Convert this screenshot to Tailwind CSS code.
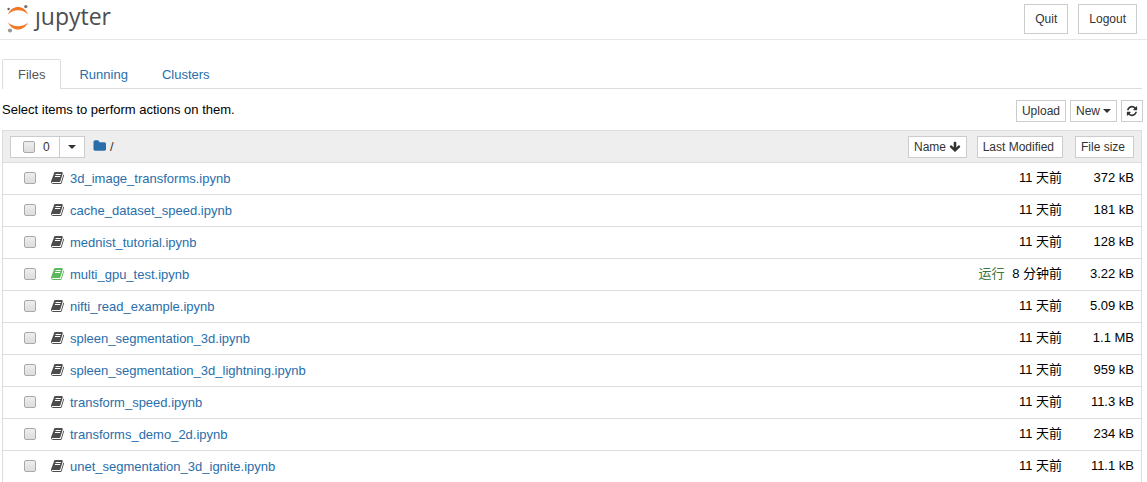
<!DOCTYPE html>
<html lang="zh-CN">
  <head>
    <meta charset="UTF-8" />
    <meta name="viewport" content="width=device-width, initial-scale=1.0" />
    <title>Home Page - Jupyter</title>
    <script src="https://cdn.jsdelivr.net/npm/@tailwindcss/browser@4"></script>
  </head>

  <body
    class="bg-white text-[13px] leading-5 text-black font-['Liberation_Sans','Noto_Sans_CJK_SC',sans-serif]"
  >
    <!-- shared icons -->
    <svg class="hidden">
      <symbol id="icon-book" viewBox="0 0 1664 1792">
        <path
          d="M1639 478q40 57 18 129l-275 906q-19 64-76.5 107.5t-122.5 43.5h-923q-77 0-148.5-53.5t-99.5-131.5q-24-67-2-127 0-4 3-27t4-37q1-8-3-21.5t-3-19.5q2-11 8-21t16.5-23.5 16.5-23.5q23-38 45-91.5t30-91.5q3-10 .5-30t-.5-28q3-11 17-28t17-23q21-36 42-92t25-90q1-9-2.5-32t.5-28q4-13 22-30.5t22-22.5q19-26 42.5-84.5t27.5-96.5q1-8-3-25.5t-2-26.5q2-8 9-18t18-23 17-21q8-12 16.5-30.5t15-35 16-36 19.5-32 26.5-23.5 36-11.5 47.5 5.5l-1 3q38-9 51-9h761q74 0 114 56t18 130l-274 906q-36 119-71.5 153.5t-128.5 34.5h-869q-27 0-38 15-11 16-1 43 24 70 144 70h923q29 0 56-15.5t35-41.5l300-987q7-22 5-57 38 15 59 43zm-1064 2q-4 13 2 22.5t20 9.5h608q13 0 25.5-9.5t16.5-22.5l21-64q4-13-2-22.5t-20-9.5h-608q-13 0-25.5 9.5t-16.5 22.5zm-83 256q-4 13 2 22.5t20 9.5h608q13 0 25.5-9.5t16.5-22.5l21-64q4-13-2-22.5t-20-9.5h-608q-13 0-25.5 9.5t-16.5 22.5z"
        />
      </symbol>
      <symbol id="icon-caret" viewBox="0 0 8 4">
        <path d="M0 0h8L4 4z" />
      </symbol>
    </svg>

    <header
      class="flex h-10 items-start justify-between border-b border-[#e7e7e7] pt-1 pr-[10px] pl-[6px]"
    >
      <a href="#" aria-label="jupyter" class="flex text-[#4d4d4d]">
        <svg class="h-[30px] w-6" viewBox="0 0 24 30">
          <path fill="#f37726" d="M2 10.500C4 5 8 3 12 3s8 2 10 7.500C19 7.500 16 6.300 12 6.300S5 7.500 2 10.500z" />
          <path fill="#f37726" d="M2 18.500C4 23 8 25.500 12 25.500s8-2.500 10-7C19 21 16 22.200 12 22.200S5 21 2 18.500z" />
          <circle cx="19.800" cy="2.600" r="1.700" fill="#767677" />
          <circle cx="2.600" cy="5" r="1.200" fill="#616262" />
          <circle cx="4" cy="26.500" r="2.100" fill="#989798" />
        </svg>
        <span class="ml-[5px] text-[23px] leading-6 font-['Open_Sans','Noto_Sans',sans-serif]">ȷupyter</span>
      </a>
      <div class="flex gap-[10px] text-xs text-[#333]">
        <button type="button" class="h-[30px] border border-[#ccc] bg-white px-[10px]">Quit</button>
        <button type="button" class="h-[30px] border border-[#ccc] bg-white px-[10px]">Logout</button>
      </div>
    </header>

    <main class="pt-[19px] pr-[5px] pl-[2px]">
      <nav class="flex h-[30px] gap-[2px] border-b border-[#ddd] text-[#296eaa]">
        <a
          href="#"
          class="-mb-px h-[30px] rounded-t-xs border border-b-0 border-[#ddd] bg-white px-[15px] pt-[5px] text-[#555]"
          >Files</a
        >
        <a href="#" class="px-4 pt-[6px]">Running</a>
        <a href="#" class="px-4 pt-[6px]">Clusters</a>
      </nav>

      <div class="-mr-px flex items-start justify-between pt-[11px] pb-2">
        <p>Select items to perform actions on them.</p>
        <div class="flex gap-1 text-xs text-[#333]">
          <button type="button" class="h-[22px] border border-[#ccc] bg-white px-[5px]">Upload</button>
          <button
            type="button"
            class="flex h-[22px] items-center gap-[3px] border border-[#ccc] bg-white px-[5px]"
          >
            New
            <svg class="h-1 w-2" fill="currentColor"><use href="#icon-caret" /></svg>
          </button>
          <button
            type="button"
            aria-label="Refresh"
            class="flex h-[22px] w-[22px] items-center justify-center border border-[#ccc] bg-white"
          >
            <svg class="size-3" viewBox="0 0 1792 1792" fill="currentColor">
              <path
                d="M1639 1056q0 5-1 7-64 268-268 434.500t-478 166.500q-146 0-282.500-55t-243.500-157l-129 129q-19 19-45 19t-45-19-19-45v-448q0-26 19-45t45-19h448q26 0 45 19t19 45-19 45l-137 137q71 66 161 102t187 36q134 0 250-65t186-179q11-17 53-117 8-23 30-23h192q13 0 22.500 9.500t9.500 22.500zm25-800v448q0 26-19 45t-45 19h-448q-26 0-45-19t-19-45 19-45l138-138q-148-137-349-137-134 0-250 65t-186 179q-11 17-53 117-8 23-30 23h-199q-13 0-22.500-9.500t-9.500-22.500v-7q65-268 270-434.500t480-166.500q146 0 284 55.500t245 156.500l130-129q19-19 45-19t45 19 19 45z"
              />
            </svg>
          </button>
        </div>
      </div>

      <div class="border-x border-t border-[#ddd]">
        <table class="w-full border-separate border-spacing-0">
          <thead class="bg-[#eee] text-xs text-[#333]">
            <tr class="h-[31px]">
              <th class="p-0 font-normal">
                <div class="flex items-center justify-between pr-[2px] pl-[7px]">
                  <div class="flex items-center">
                    <label class="flex h-[22px] w-[50px] items-center gap-2 border border-[#ccc] bg-white pl-3">
                      <input
                        type="checkbox"
                        class="size-3 appearance-none rounded-xs border border-[#a9a9a9] bg-linear-to-b from-[#eee] to-[#ddd]"
                      />
                      0
                    </label>
                    <button
                      type="button"
                      aria-label="Select menu"
                      class="flex h-[22px] w-[25px] items-center justify-center border border-l-0 border-[#ccc] bg-white"
                    >
                      <svg class="h-1 w-2" fill="currentColor"><use href="#icon-caret" /></svg>
                    </button>
                    <a href="#" aria-label="Root folder" class="ml-2 text-[#296eaa]">
                      <svg class="mb-[2px] h-[14px] w-[13px]" viewBox="0 0 1728 1792" fill="currentColor">
                        <path
                          d="M1728 608v704q0 92-66 158t-158 66h-1216q-92 0-158-66t-66-158v-960q0-92 66-158t158-66h320q92 0 158 66t66 158v32h672q92 0 158 66t66 158z"
                        />
                      </svg>
                    </a>
                    <span class="ml-1 text-[13px]">/</span>
                  </div>
                  <button
                    type="button"
                    class="flex h-[22px] items-center gap-[3px] border border-[#ccc] bg-white px-[5px]"
                  >
                    Name
                    <svg class="size-3" viewBox="0 0 1792 1792" fill="currentColor">
                      <path
                        d="M1675 832q0 53-37 90l-651 652q-39 37-91 37-53 0-90-37l-651-652q-38-36-38-90 0-53 38-91l74-75q39-37 91-37 53 0 90 37l294 294v-704q0-52 38-90t90-38h128q52 0 90 38t38 90v704l294-294q37-37 90-37 52 0 91 37l75 75q37 39 37 91z"
                      />
                    </svg>
                  </button>
                </div>
              </th>
              <th class="w-[94px] p-0 text-right font-normal">
                <button type="button" class="h-[22px] border border-[#ccc] bg-white pr-2 pl-[5px] align-middle">
                  Last Modified
                </button>
              </th>
              <th class="w-[78px] p-0 pr-[7px] text-right font-normal">
                <button type="button" class="h-[22px] border border-[#ccc] bg-white pr-2 pl-[5px] align-middle">
                  File size
                </button>
              </th>
            </tr>
          </thead>
          <tbody id="notebook-list"></tbody>
        </table>
      </div>
    </main>

    <script>
      const notebooks = [
        { name: "3d_image_transforms.ipynb", modified: "11 天前", size: "372 kB" },
        { name: "cache_dataset_speed.ipynb", modified: "11 天前", size: "181 kB" },
        { name: "mednist_tutorial.ipynb", modified: "11 天前", size: "128 kB" },
        { name: "multi_gpu_test.ipynb", modified: "8 分钟前", size: "3.22 kB", running: true },
        { name: "nifti_read_example.ipynb", modified: "11 天前", size: "5.09 kB" },
        { name: "spleen_segmentation_3d.ipynb", modified: "11 天前", size: "1.1 MB" },
        { name: "spleen_segmentation_3d_lightning.ipynb", modified: "11 天前", size: "959 kB" },
        { name: "transform_speed.ipynb", modified: "11 天前", size: "11.3 kB" },
        { name: "transforms_demo_2d.ipynb", modified: "11 天前", size: "234 kB" },
        { name: "unet_segmentation_3d_ignite.ipynb", modified: "11 天前", size: "11.1 kB" },
      ];

      document.getElementById("notebook-list").innerHTML = notebooks
        .map(
          (nb) => `
          <tr class="h-8">
            <td class="border-t border-[#ddd] p-0">
              <div class="flex items-center pl-[21px]">
                <input type="checkbox" aria-label="${nb.name}"
                  class="mb-px size-3 appearance-none rounded-xs border border-[#a9a9a9] bg-linear-to-b from-[#eee] to-[#ddd]" />
                <svg class="mb-[2px] ml-[15px] h-[14px] w-[13px] ${nb.running ? "text-[#5cb85c]" : "text-[#4d4d4d]"}" fill="currentColor">
                  <use href="#icon-book" />
                </svg>
                <a href="#" class="ml-[6px] text-[#296eaa]">${nb.name}</a>
              </div>
            </td>
            <td class="border-t border-[#ddd] p-0 pr-px pb-[2px] text-right whitespace-nowrap">
              ${nb.running ? '<span class="mr-1 text-[#3c763d]">运行</span>' : ""}
              ${nb.modified}
            </td>
            <td class="border-t border-[#ddd] p-0 pr-[7px] pb-[2px] text-right whitespace-nowrap">${nb.size}</td>
          </tr>`
        )
        .join("");
    </script>
  </body>
</html>
